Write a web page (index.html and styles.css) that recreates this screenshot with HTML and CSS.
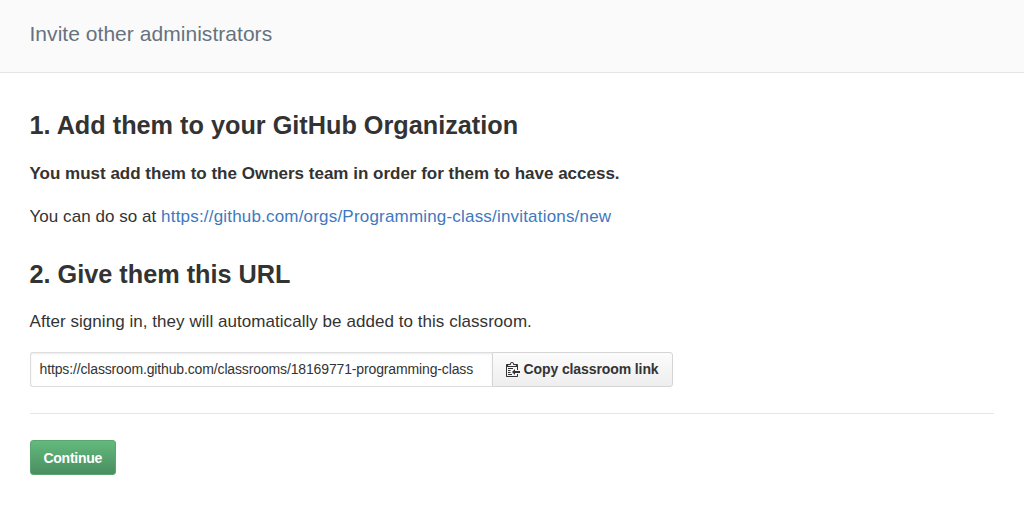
FILE: index.html
```html
<!DOCTYPE html>
<html lang="en">
<head>
    <meta charset="UTF-8">
    <meta name="viewport" content="width=device-width, initial-scale=1.0">
    <title>Invite other administrators</title>
    <link rel="stylesheet" href="styles.css">
</head>
<body>

    <!-- Header -->
    <div class="page-header">Invite other administrators</div>

    <div class="content">
        <h2>1. Add them to your GitHub Organization</h2>
        <p class="must"><strong>You must add them to the Owners team in order for them to have access.</strong></p>
        <p class="at">You can do so at <a href="#">https://github.com/orgs/Programming-class/invitations/new</a></p>

        <h2 class="second">2. Give them this URL</h2>
        <p class="after">After signing in, they will automatically be added to this classroom.</p>

        <div class="input-group">
            <input type="text" value="https://classroom.github.com/classrooms/18169771-programming-class" readonly>
            <button class="copy">
                <svg width="14" height="16" viewBox="0 0 14 16" fill="#333">
                    <path d="M2 13h4v1H2v-1zm5-6H2v1h5V7zm2 3V8l-3 3 3 3v-2h5v-2H9zM4.5 9H2v1h2.5V9zM2 12h2.5v-1H2v1zm9 1h1v2c-.02.28-.11.52-.3.7-.19.18-.42.28-.7.3H1c-.55 0-1-.45-1-1V4c0-.55.45-1 1-1h3c0-1.11.89-2 2-2 1.11 0 2 .89 2 2h3c.55 0 1 .45 1 1v5h-1V6H1v9h10v-2zM2 5h8c0-.55-.45-1-1-1H8c-.55 0-1-.45-1-1s-.45-1-1-1-1 .45-1 1-.45 1-1 1H3c-.55 0-1 .45-1 1z"/>
                </svg>
                <span>Copy classroom link</span>
            </button>
        </div>

        <hr>

        <button class="continue">Continue</button>
    </div>

</body>
</html>
```

FILE: styles.css
```css
body {
    font-family: "Liberation Sans", Arial, sans-serif;
    color: #333;
    background: #fff;
    margin: 0;
}

.page-header {
    height: 73px;
    box-sizing: border-box;
    padding: 0 29.5px;
    line-height: 68px;
    font-size: 21px;
    letter-spacing: 0.04px;
    color: #66727e;
    background: #fafafa;
    border-bottom: 1px solid #e5e5e5;
}

.content {
    padding: 0 30px 0 29.5px;
}

h2 {
    font-size: 25.25px;
    line-height: 30px;
    font-weight: bold;
    margin: 37px 0 0;
}

h2.second {
    margin-top: 31px;
}

p {
    font-size: 17px;
    line-height: 22px;
    margin: 0;
}

.must {
    margin-top: 23px;
}

.at {
    margin-top: 21px;
    letter-spacing: 0.05px;
}

.after {
    margin-top: 22px;
    letter-spacing: 0.05px;
}

a {
    color: #4078c0;
    text-decoration: none;
    letter-spacing: 0.19px;
}

.input-group {
    display: flex;
    width: 643px;
    height: 35px;
    margin-top: 19px;
}

.input-group input {
    flex: 1;
    min-width: 0;
    box-sizing: border-box;
    padding: 0 9px 1px;
    font-family: inherit;
    font-size: 14px;
    letter-spacing: -0.14px;
    color: #333;
    background: #fff;
    border: 1px solid #ddd;
    border-right: none;
    border-radius: 3px 0 0 3px;
    box-shadow: inset 0 1px 2px rgba(0, 0, 0, 0.075);
    outline: none;
}

.copy {
    display: flex;
    align-items: center;
    gap: 4px;
    width: 181px;
    box-sizing: border-box;
    padding: 0 0 2px 13px;
    font-family: inherit;
    font-size: 14px;
    letter-spacing: -0.1px;
    font-weight: bold;
    white-space: nowrap;
    color: #333;
    background: linear-gradient(#fcfcfc, #eee);
    border: 1px solid #d5d5d5;
    border-radius: 0 3px 3px 0;
    cursor: pointer;
}

.copy svg {
    flex-shrink: 0;
}

hr {
    height: 1px;
    margin: 26px 0 26px;
    border: none;
    background: #e5e5e5;
}

.continue {
    display: block;
    width: 86.5px;
    height: 35px;
    padding: 0;
    font-family: inherit;
    font-size: 14px;
    letter-spacing: -0.25px;
    font-weight: bold;
    color: #fff;
    background: linear-gradient(#63ba7d, #4a8e60);
    border: 1px solid #5aa673;
    border-radius: 3px;
    cursor: pointer;
}
```
